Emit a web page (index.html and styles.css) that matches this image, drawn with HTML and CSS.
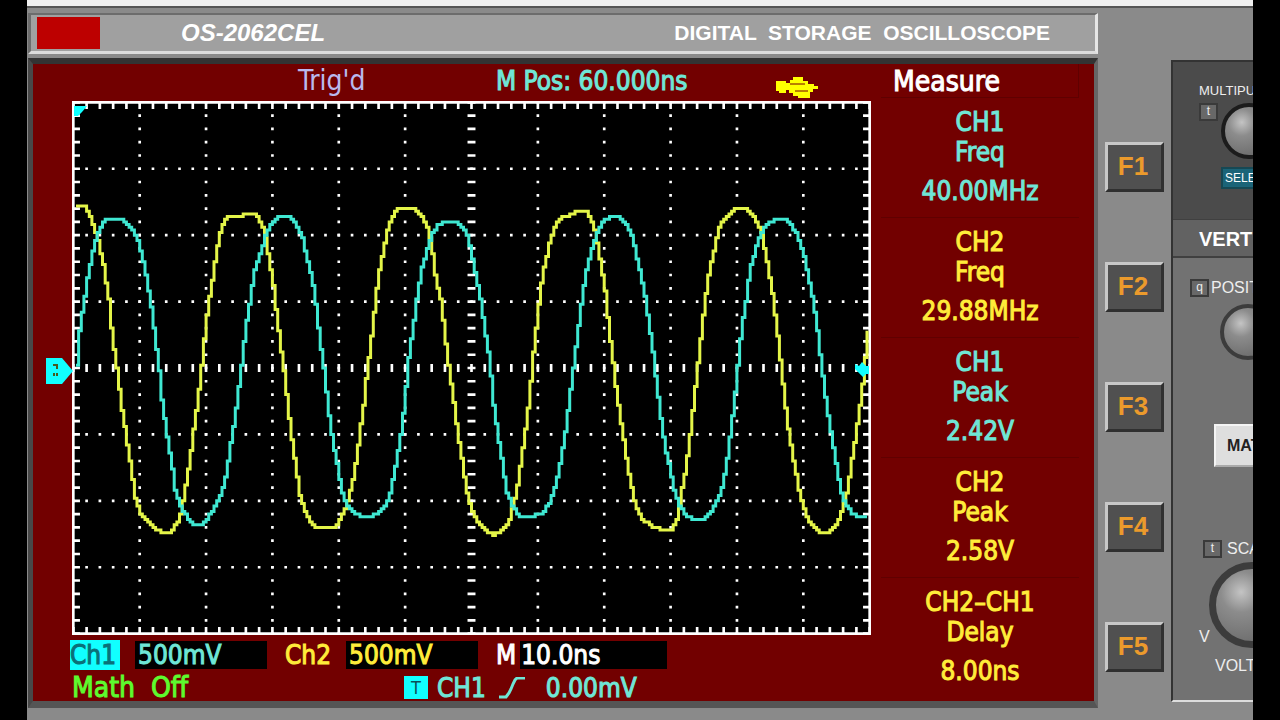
FILE: index.html
```html
<!DOCTYPE html>
<html lang="en">
<head>
    <meta charset="UTF-8">
    <meta name="viewport" content="width=device-width, initial-scale=1.0">
    <title>OS-2062CEL</title>
    <link rel="stylesheet" href="styles.css">
</head>
<body>

<div class="app">
    <div class="titlebar"></div>
    <div class="front">
        <main class="scope">
            <header class="brand">
                <span class="brand-logo"></span>
                <span class="brand-model">OS-2062CEL</span>
                <span class="brand-name">DIGITAL  STORAGE  OSCILLOSCOPE</span>
            </header>

            <section class="screen lcd">
                <div class="display">
                    <div class="topline">
                        <span class="trig">Trig'd</span>
                        <span class="ch1">M Pos: 60.000ns</span>
                        <svg class="usb" viewBox="0 0 42 22">
                            <path d="M0 5h10v2h4V4h3V1h10v4h5v3h6v2h4v3h-5v3h-3v6H22v-2h-5v-3h-4v-3h-3v3H3v-2H0z" fill="#ffff00"/>
                            <path d="M14 8h15M19 15h13" stroke="#720000" stroke-width="1"/>
                        </svg>
                    </div>

                    <div class="plot">
                        <svg class="grid" viewBox="72 101 799 534">
                            <rect x="72" y="101" width="799" height="534" fill="#000"/>
                            <g id="graticule" transform="translate(72 101) scale(2.6545 2.6567)" fill="none" stroke="#fff"></g>
                            <path id="wave2" class="wave wave-ch2"/>
                            <path id="wave1" class="wave wave-ch1"/>
                            <path d="M74 106h13l-5 6-4 4h-4z" fill="#1ff"/>
                            <path d="M855 364l4 2 3-4 4 4h3v8h-3l-3 3-5-5-3-3z" fill="#1ff"/>
                        </svg>
                        <svg class="marker" viewBox="0 0 27 26">
                            <path d="M0 0h16l11 13-11 13H0z" fill="#1ff"/>
                            <path d="M7 7h4v4M8 15v3M11 15v3" stroke="#465a20" stroke-width="2" fill="none"/>
                        </svg>
                    </div>

                    <div class="status">
                        <span class="tag">Ch1</span>
                        <span class="value ch1">500mV</span>
                        <span class="ch2">Ch2</span>
                        <span class="value ch2">500mV</span>
                        <span class="base">M</span>
                        <span class="value base">10.0ns</span>
                    </div>
                    <div class="status status-trigger">
                        <span class="math">Math&nbsp; Off</span>
                        <span class="trig-icon">T</span>
                        <span class="ch1">CH1</span>
                        <svg class="slope" viewBox="0 0 26 22">
                            <path d="M0 20h7l3-4 2-4 2-5 2-4 2-2h8" fill="none" stroke="#6fe6d6" stroke-width="3"/>
                        </svg>
                        <span class="ch1">0.00mV</span>
                    </div>
                </div>

                <aside class="menu">
                    <h2 class="menu-title">Measure</h2>
                    <div class="menu-item ch1"><span>CH1</span><span>Freq</span><span class="reading">40.00MHz</span></div>
                    <div class="menu-item ch2"><span>CH2</span><span>Freq</span><span class="reading">29.88MHz</span></div>
                    <div class="menu-item ch1"><span>CH1</span><span>Peak</span><span class="reading">2.42V</span></div>
                    <div class="menu-item ch2"><span>CH2</span><span>Peak</span><span class="reading">2.58V</span></div>
                    <div class="menu-item ch2"><span>CH2–CH1</span><span>Delay</span><span class="reading">8.00ns</span></div>
                </aside>
            </section>
        </main>

        <nav class="keys">
            <button type="button" class="key">F1</button>
            <button type="button" class="key">F2</button>
            <button type="button" class="key">F3</button>
            <button type="button" class="key">F4</button>
            <button type="button" class="key">F5</button>
        </nav>

        <aside class="controls">
            <section class="multi">
                <span class="label">MULTIPU</span>
                <div class="knob-row">
                    <span class="hint">t</span>
                    <span class="knob knob-black"></span>
                </div>
                <button type="button" class="select">SELE</button>
            </section>
            <h2 class="controls-title">VERT</h2>
            <section class="vertical">
                <div class="hint-row"><span class="hint">q</span><span>POSIT</span></div>
                <span class="knob knob-position"></span>
                <button type="button" class="math-button">MAT</button>
                <div class="hint-row hint-row-scale"><span class="hint">t</span><span>SCA</span></div>
                <div class="scale-row"><span class="unit">V</span><span class="knob knob-large"></span></div>
                <span class="volts">VOLT</span>
            </section>
        </aside>
    </div>
</div>

<script src="scope.js"></script>
</body>
</html>
```

FILE: styles.css
```css
* {
    box-sizing: border-box;
}
body {
    margin: 0;
    padding: 0 27px;
    background: #000;
    font-family: "Liberation Sans", Arial, sans-serif;
}
.app {
    min-height: 100vh;
    background: #8a8a8a;
    overflow: hidden;
}
.titlebar {
    height: 8px;
    background: #f0f0f0;
    border-bottom: 2px solid #555;
}
.front {
    display: flex;
    gap: 7px;
    padding: 5px 0 10px 1px;
}
.scope {
    flex: 1;
    min-width: 0;
}

/* name plate */
.brand {
    display: flex;
    align-items: center;
    height: 41px;
    margin-bottom: 4px;
    padding-left: 6px;
    padding-right: 45px;
    background: #a0a0a0;
    border: solid #6c6c6c;
    border-width: 2px 3px 3px;
    border-right-color: #e6e6e6;
    border-bottom-color: #dcdcdc;
    color: #fff;
    font-weight: bold;
}
.brand-logo {
    width: 63px;
    height: 32px;
    background: #bd0000;
}
.brand-model {
    margin-left: 81px;
    font-size: 24px;
    font-style: italic;
}
.brand-name {
    margin-left: auto;
    font-size: 21px;
    white-space: pre;
}

/* lcd */
.screen {
    display: grid;
    grid-template-columns: 1fr 198px;
    padding-right: 15px;
    background: #720000;
    border: solid;
    border-width: 6px 4px 7px 5px;
    border-color: #333 #666 #555 #484848;
}
.lcd {
    font-family: "DejaVu Sans Condensed", "DejaVu Sans", sans-serif;
    font-size: 26px;
    line-height: 30px;
    -webkit-text-stroke: 1px;
}
.ch1 {
    color: #6fe6d6;
}
.ch2 {
    color: #ffec3a;
}
.display {
    padding: 0 10px 0 39px;
}
.topline {
    display: grid;
    grid-template-columns: 198fr 280fr 95fr;
    align-items: center;
    height: 37px;
    padding-bottom: 3px;
    padding-left: 226px;
}
.trig {
    color: #b9b9ee;
    font-size: 28px;
    -webkit-text-stroke: 0;
}
.usb {
    align-self: end;
    width: 42px;
    height: 22px;
}
.plot {
    position: relative;
}
.grid {
    display: block;
    width: 100%;
}
.wave {
    fill: none;
    stroke-width: 3;
}
.wave-ch1 {
    stroke: #3fe8d2;
}
.wave-ch2 {
    stroke: #e4f548;
}
.marker {
    position: absolute;
    top: 257px;
    left: -26px;
    width: 27px;
    height: 26px;
}
.status {
    display: flex;
    align-items: center;
    height: 39px;
}
.tag {
    width: 50px;
    margin-left: -2px;
    background: #1ff;
    color: #0a7078;
}
.value {
    width: 132px;
    height: 28px;
    margin: 0 18px 0 15px;
    padding-left: 3px;
    background: #000;
    line-height: 28px;
}
.value.base {
    width: 147px;
    margin-left: 4px;
    padding-left: 1px;
}
.base {
    color: #fff;
}
.status-trigger {
    height: 27px;
}
.math {
    flex: 0 0 332px;
    color: #5dfb2e;
    font-size: 28px;
}
.trig-icon {
    width: 24px;
    height: 23px;
    margin-right: 9px;
    background: #1ff;
    color: #0a5058;
    font-size: 18px;
    line-height: 23px;
    text-align: center;
    -webkit-text-stroke: 0;
}
.slope {
    width: 26px;
    height: 22px;
    margin: 0 21px 0 13px;
}

/* side menu */
.menu-title {
    height: 34px;
    margin: 0;
    padding-left: 12px;
    border: solid #5f0000;
    border-width: 0 1px 1px 0;
    color: #fff;
    font-size: 28px;
    font-weight: normal;
    line-height: 36px;
}
.menu-item {
    display: flex;
    flex-direction: column;
    align-items: center;
    height: 120px;
    padding-top: 9px;
    border-bottom: 1px solid #600000;
}
.menu-item:last-child {
    border-bottom: none;
}
.reading {
    margin-top: 9px;
}

/* soft keys */
.keys {
    display: flex;
    flex-direction: column;
    gap: 70px;
    padding-top: 129px;
}
.key {
    width: 59px;
    height: 50px;
    padding: 0 3px 2px 0;
    background: #505050;
    border: 3px solid;
    border-color: #c8c8c8 #303030 #303030 #c8c8c8;
    color: #eb9a2c;
    font-family: inherit;
    font-size: 26px;
    font-weight: bold;
}

/* right hand panel, runs out of the window */
.controls {
    flex: 0 0 82px;
    margin: 47px 0 6px;
    background: #727272;
    border: solid #333;
    border-width: 2px 0 2px 2px;
    border-bottom-color: #ddd;
    color: #eee;
    font-size: 16px;
    line-height: 18px;
    white-space: nowrap;
    overflow: hidden;
}
.multi {
    height: 157px;
    padding: 20px 0 0 26px;
    background: #4b4b4b;
}
.label {
    display: block;
    font-size: 13px;
}
.hint {
    flex: none;
    width: 19px;
    height: 18px;
    background: #686868;
    border: 2px solid #3a3a3a;
    font-size: 12px;
    line-height: 13px;
    text-align: center;
}
.knob-row {
    display: flex;
    gap: 3px;
    margin-top: 3px;
}
.knob {
    display: block;
    flex: none;
    width: 56px;
    height: 56px;
    border: 4px solid #3c3c3c;
    border-radius: 50%;
    background: radial-gradient(circle at 35% 32%, #c4c4c4, #8c8c8c 30%, #6c6c6c 80%);
}
.knob-black {
    border-color: #1c1c1c;
}
.select {
    display: block;
    width: 60px;
    height: 22px;
    margin: 8px 0 0 22px;
    padding: 0 2px;
    background: #1b6478;
    border: 2px solid #164854;
    color: #fff;
    font-family: inherit;
    font-size: 12px;
    text-align: left;
}
.controls-title {
    height: 39px;
    margin: 0;
    padding-left: 26px;
    background: #626262;
    border: solid #404040;
    border-width: 1px 0 2px;
    color: #fff;
    font-size: 20px;
    line-height: 38px;
}
.vertical {
    padding-top: 21px;
}
.hint-row {
    display: flex;
    gap: 2px;
    padding-left: 17px;
}
.knob-position {
    margin: 7px 0 0 47px;
}
.math-button {
    display: block;
    width: 64px;
    height: 43px;
    margin: 64px 0 73px 41px;
    padding: 0 11px;
    background: #dedede;
    border: 2px solid #f4f4f4;
    border-bottom-color: #aaa;
    color: #222;
    font-family: inherit;
    font-size: 16px;
    font-weight: bold;
    text-align: left;
}
.hint-row-scale {
    gap: 5px;
    padding-left: 30px;
}
.scale-row {
    display: flex;
    align-items: flex-end;
    margin-top: 4px;
    padding-left: 26px;
}
.unit {
    width: 10px;
    padding-bottom: 2px;
}
.knob-large {
    width: 86px;
    height: 86px;
    border-width: 7px;
}
.volts {
    display: block;
    margin: 9px 0 0 42px;
}
```

FILE: scope.js
```javascript
// one lcd dot, in drawing units
const DOT_X = 799 / 301;
const DOT_Y = 534 / 201;
const LEFT = 72;
const TOP = 101;

const ch1 = [
    [76,365],[79,326],[84,296],[88,269],[93,247],[97,233],[102,223],[108,218],[121,219],[127,224],[133,232],[138,244],
    [145,274],[150,304],[154,338],[158,368],[162,410],[167,441],[172,473],[174,490],[180,507],[188,520],[193,525],[201,525],
    [208,516],[215,506],[221,492],[225,474],[230,443],[236,402],[241,362],[245,326],[249,300],[254,268],[262,245],[265,232],
    [272,222],[280,216],[289,216],[295,224],[301,236],[304,250],[311,277],[315,306],[319,340],[323,368],[327,406],[331,436],
    [338,474],[341,492],[347,507],[354,514],[361,517],[371,517],[379,511],[385,504],[390,491],[393,474],[399,440],[404,400],
    [407,362],[412,328],[416,298],[421,268],[427,246],[431,235],[436,226],[444,221],[454,221],[461,227],[467,236],[471,256],
    [475,276],[480,302],[484,330],[489,364],[492,400],[497,436],[503,474],[505,489],[511,505],[518,515],[525,518],[533,516],
    [541,513],[548,504],[553,492],[557,474],[563,442],[569,396],[573,363],[577,330],[581,300],[586,267],[592,245],[597,229],
    [604,220],[611,215],[619,218],[625,225],[631,236],[637,263],[643,290],[648,322],[653,361],[656,388],[660,418],[664,446],
    [670,474],[673,490],[679,507],[686,516],[693,519],[702,519],[710,512],[716,501],[721,488],[724,474],[728,446],[733,406],
    [737,366],[740,334],[745,300],[749,270],[756,244],[760,233],[766,225],[774,219],[784,219],[791,226],[797,236],[803,256],
    [809,284],[813,304],[817,334],[821,370],[825,402],[830,433],[837,474],[839,489],[845,506],[852,514],[858,517],[869,517]
];

const ch2 = [
    [76,206],[84,207],[90,219],[97,240],[103,267],[108,301],[111,333],[116,370],[121,410],[126,442],[131,473],[133,493],
    [139,512],[147,522],[155,530],[163,533],[170,532],[177,522],[181,508],[184,490],[187,473],[192,436],[197,398],[201,363],
    [205,324],[208,300],[213,269],[217,244],[219,232],[223,222],[228,216],[241,216],[245,213],[254,213],[258,219],[263,230],
    [266,246],[272,282],[276,318],[280,350],[284,378],[289,426],[296,473],[297,487],[302,506],[307,518],[313,527],[333,527],
    [340,519],[347,501],[352,480],[354,470],[358,440],[363,402],[367,364],[372,324],[375,294],[380,261],[384,243],[386,231],
    [391,218],[397,208],[412,208],[419,214],[424,221],[428,233],[431,249],[435,279],[441,306],[444,336],[448,368],[453,403],
    [457,434],[463,473],[465,488],[470,508],[477,522],[485,530],[492,535],[500,531],[508,522],[512,506],[516,488],[518,474],
    [524,434],[528,403],[531,368],[535,330],[538,303],[542,272],[547,250],[550,238],[553,227],[559,219],[568,215],[577,211],
    [585,211],[590,220],[594,232],[599,259],[604,290],[608,328],[611,353],[615,388],[619,416],[623,442],[628,473],[631,490],
    [635,507],[641,520],[651,526],[662,530],[671,530],[676,520],[679,503],[682,483],[684,473],[689,437],[693,400],[697,364],
    [702,320],[705,294],[709,267],[715,242],[718,228],[724,218],[730,213],[736,208],[744,208],[750,214],[756,222],[761,234],
    [766,262],[772,297],[776,330],[780,366],[784,402],[788,435],[795,472],[797,488],[803,509],[808,520],[815,530],[823,534],
    [831,530],[838,520],[843,505],[847,488],[849,472],[855,433],[859,405],[863,373],[865,350],[868,320]
];

function levelAt(points, x) {
    let i = 1;
    while (i < points.length - 1 && points[i][0] < x) i++;
    const [x0, y0] = points[i - 1];
    const [x1, y1] = points[i];
    return y0 + (y1 - y0) * (x - x0) / (x1 - x0);
}

// the trace moves one dot column at a time, so it comes out as steps
function tracePath(points) {
    let d = '';
    for (let col = 1; col < 300; col++) {
        const x = LEFT + (col + 0.5) * DOT_X;
        const row = Math.round((levelAt(points, x) - TOP) / DOT_Y - 0.5);
        const y = TOP + (row + 0.5) * DOT_Y;
        d += d ? `H${x.toFixed(1)}V${y.toFixed(1)}` : `M${x.toFixed(1)} ${y.toFixed(1)}`;
    }
    return d;
}

function addLine(d, width, dash) {
    const line = document.createElementNS('http://www.w3.org/2000/svg', 'path');
    line.setAttribute('d', d);
    line.setAttribute('stroke-width', width);
    if (dash) line.setAttribute('stroke-dasharray', dash);
    document.getElementById('graticule').appendChild(line);
}

// 12 x 8 divisions, 25 dots each
for (let x = 25; x < 300; x += 25) {
    addLine(`M${x + 0.5} 0V201`, x === 150 ? 3 : 1, '1 4');
}
for (let y = 25; y < 200; y += 25) {
    addLine(`M0 ${y + 0.5}H301`, y === 100 ? 3 : 1, '1 4');
}
addLine('M0 1.5H301M0 199.5H301', 3, '1 4');
addLine('M1.5 0V201M299.5 0V201', 3, '1 4');
addLine('M0.5 0.5H300.5V200.5H0.5Z', 1);

document.getElementById('wave1').setAttribute('d', tracePath(ch1));
document.getElementById('wave2').setAttribute('d', tracePath(ch2));
```
